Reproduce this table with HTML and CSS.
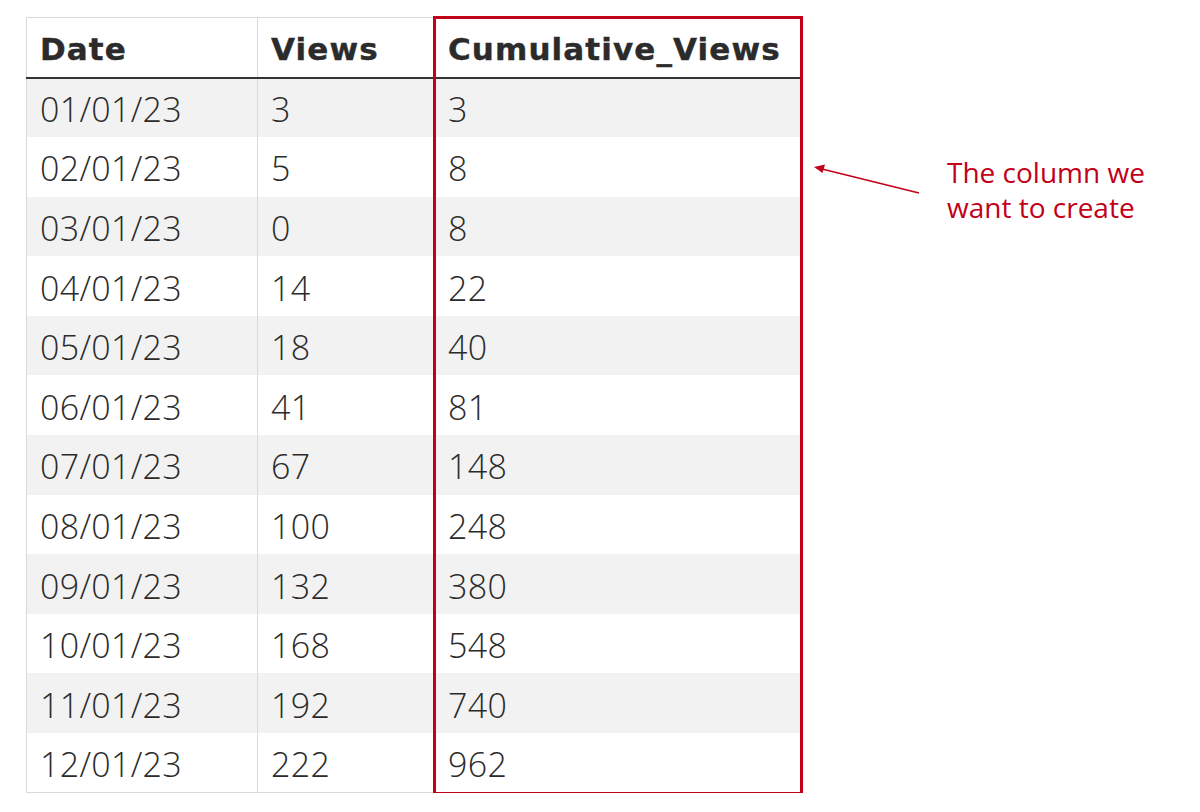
FILE: index.html
```html
<!DOCTYPE html>
<html>
<head>
<meta charset="utf-8">
<link rel="stylesheet" href="styles.css">
</head>
<body>
<div class="page">
  <div class="table-wrap">
    <table class="data">
      <colgroup>
        <col class="c1"><col class="c2"><col class="c3">
      </colgroup>
      <thead>
        <tr><th>Date</th><th>Views</th><th>Cumulative_Views</th></tr>
      </thead>
      <tbody>
        <tr><td>01/01/23</td><td>3</td><td>3</td></tr>
        <tr><td>02/01/23</td><td>5</td><td>8</td></tr>
        <tr><td>03/01/23</td><td>0</td><td>8</td></tr>
        <tr><td>04/01/23</td><td>14</td><td>22</td></tr>
        <tr><td>05/01/23</td><td>18</td><td>40</td></tr>
        <tr><td>06/01/23</td><td>41</td><td>81</td></tr>
        <tr><td>07/01/23</td><td>67</td><td>148</td></tr>
        <tr><td>08/01/23</td><td>100</td><td>248</td></tr>
        <tr><td>09/01/23</td><td>132</td><td>380</td></tr>
        <tr><td>10/01/23</td><td>168</td><td>548</td></tr>
        <tr><td>11/01/23</td><td>192</td><td>740</td></tr>
        <tr><td>12/01/23</td><td>222</td><td>962</td></tr>
      </tbody>
    </table>
    <div class="highlight"></div>
  </div>
  <div class="note">
    <svg class="arrow" width="116" height="40" viewBox="0 0 116 40">
      <line x1="109" y1="33" x2="12" y2="9" stroke="#c20018" stroke-width="1.6"/>
      <polygon points="4,7 15,4.5 12.5,13" fill="#c20018"/>
    </svg>
    <div class="note-text">The column we<br>want to create</div>
  </div>
</div>
</body>
</html>
```
FILE: styles.css
```css
html, body {
  margin: 0;
  padding: 0;
  background: #ffffff;
}
.page {
  display: flex;
  align-items: flex-start;
  padding: 17px 0 0 26px;
  font-family: "Open Sans", "Liberation Sans", sans-serif;
  color: #2b2b2b;
}
.table-wrap {
  position: relative;
}
.data {
  border-collapse: collapse;
  border: 1px solid #d9d9d9;
  table-layout: fixed;
  width: 776px;
}
.c1 { width: 231px; }
.c2 { width: 177px; }
.c3 { width: 368px; }
.data th, .data td {
  box-sizing: border-box;
  border-left: 1px solid #d9d9d9;
  border-right: 1px solid #d9d9d9;
  text-align: left;
  padding: 0 0 0 13px;
  white-space: nowrap;
  overflow: hidden;
}
.data th {
  font-family: "DejaVu Sans", "Open Sans", sans-serif;
  font-weight: 700;
  font-size: 31px;
  letter-spacing: 1.1px;
  height: 60px;
  padding-top: 3px;
  border-bottom: 2px solid #333333;
  -webkit-text-stroke: 0.4px #2b2b2b;
}
.data td {
  font-weight: 300;
  font-size: 34px;
  letter-spacing: 0.3px;
  height: 59.6px;
  padding-top: 3px;
}
.data tbody tr:nth-child(odd) td {
  background: #f2f2f2;
}
.highlight {
  position: absolute;
  left: 407px;
  top: -1px;
  width: 364px;
  height: 773px;
  border: 3px solid #c20018;
  pointer-events: none;
}
.note {
  display: flex;
  align-items: flex-start;
  margin-left: 7px;
  margin-top: 138px;
}
.arrow {
  display: block;
  margin-top: 5px;
}
.note-text {
  margin-left: 21px;
  font-size: 28px;
  line-height: 35px;
  color: #c20018;
  font-weight: 400;
  letter-spacing: 0px;
}
```
